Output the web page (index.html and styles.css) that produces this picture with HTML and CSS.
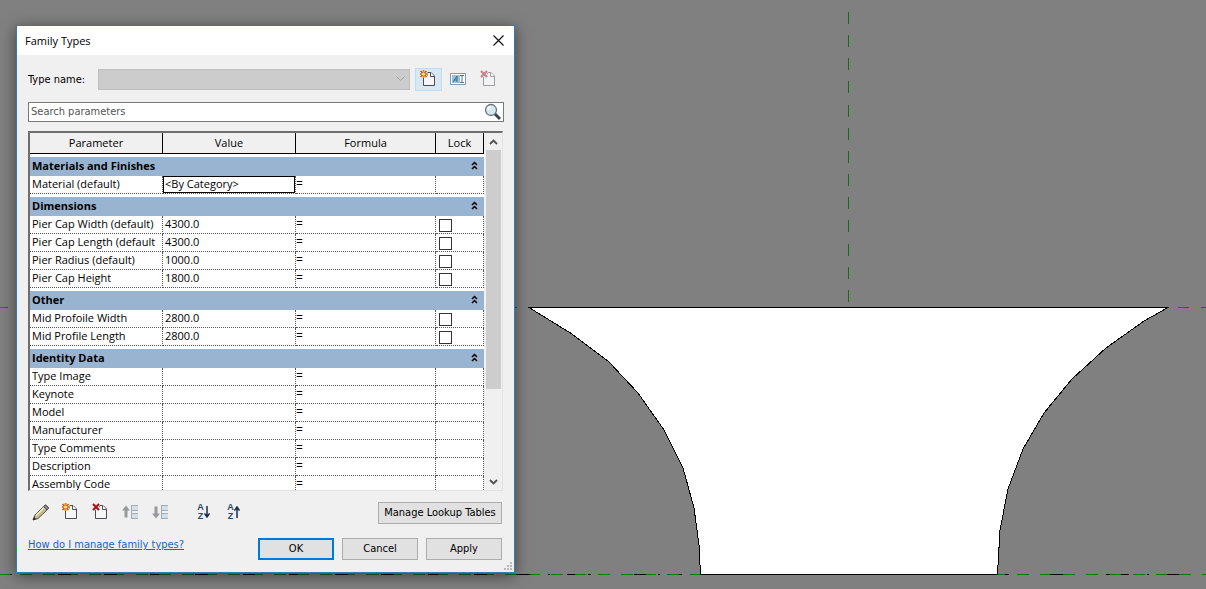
FILE: index.html
```html
<!doctype html>
<html lang="en">
    <head>
        <meta charset="UTF-8" />
        <meta name="viewport" content="width=device-width, initial-scale=1.0" />
        <title>Family Types</title>
        <link rel="stylesheet" href="styles.css">
    </head>
    <body>
        <!-- Shared icon shapes -->
        <svg class="defs" width="0" height="0" aria-hidden="true">
            <symbol id="page" viewBox="0 0 18 18">
                <path d="M4.5 6.500h4v-3h3.500l3.500 3.500v9.500h-11z" fill="#f6f6f6" stroke="#4c4c54" />
                <path d="M11.500 3.500v4h4" fill="#fff" stroke="#4c4c54" />
            </symbol>
            <symbol id="new" viewBox="1 1 18 18">
                <use href="#page" width="18" height="18" />
                <path d="M4.500 1v8M.5 5h8" stroke="#f0f0f0" stroke-width="4" />
                <path d="M4.500 1v8M.5 5h8" stroke="#e88a20" stroke-width="2" />
                <path d="M1.500 2l6 6M7.500 2l-6 6" stroke="#c8501c" stroke-width="1.500" />
                <circle cx="4.500" cy="5" r="1.600" fill="#ffec70" />
            </symbol>
            <symbol id="delete" viewBox="1 1 18 18">
                <use href="#page" width="18" height="18" />
                <path d="M1.500 1l7 7M8.500 1l-7 7" stroke="#f0f0f0" stroke-width="4" />
                <path d="M2 2l6 6M8 2l-6 6" stroke="#a81420" stroke-width="2.200" />
            </symbol>
            <symbol id="chevrons" viewBox="0 0 7 9">
                <path d="M1 4l2.500-2.500L6 4M1 8l2.500-2.500L6 8" fill="none" stroke="#000" stroke-width="1.500" />
            </symbol>
            <symbol id="list" viewBox="0 0 18 18">
                <path d="M10.500 2v14M10 2.500h7M10 7.500h7M10 10.500h7M10 15.500h7" stroke="#a0acb8" />
                <path d="M11 3h6v4h-6zM11 11h6v4h-6z" fill="#d3dee8" />
            </symbol>
        </svg>

        <!-- Pier cap elevation with its reference planes -->
        <svg class="drawing" viewBox="0 0 1206 589" preserveAspectRatio="xMinYMin" role="img" aria-label="Pier cap elevation">
            <g class="plane">
                <path d="M848.500 12V302" stroke-dasharray="12 11.160" />
                <path d="M0 307.500H8M514 307.500H517M1178 307.500H1189M1201 307.500H1206" />
                <path d="M0 574.500H10M20 574.500H700" stroke-dasharray="12 11.100" />
                <path d="M998 574.500H1206" stroke-dasharray="12 11.100" stroke-dashoffset="4" />
            </g>
            <path class="edge" d="M10 574.500h2M58 574.500h13M104 574.500h13M150 574.500h9M195 574.500h13M243 574.500h12M289 574.500h9M335 574.500h13M381 574.500h13M428 574.500h10M474 574.500h13M516 574.500h14M548 574.500h2M567 574.500h8M588 574.500h3M634 574.500h12M658 574.500h2M679 574.500h3M1005 574.500h4M1050 574.500h13M1106 574.500h4M1121 574.500h8M1147 574.500h2M1167 574.500h12" />
            <path class="pier" d="M529 307.500H1168L1144 321 1106 348 1072 379 1044 413 1023 449 1008 489 1000 530 997.500 574.500H700.500L699 545 694 508 683 468 664 430 638 393 609 362 572 334z" />
        </svg>

        <div class="dialog" role="dialog" aria-labelledby="dialog-title">
            <div class="titlebar">
                <h1 id="dialog-title">Family Types</h1>
                <button class="close" aria-label="Close">
                    <svg width="11" height="11" viewBox="0 0 11 11">
                        <path d="M.5.500l10 10M10.500.500l-10 10" stroke="#111" stroke-width="1.200" />
                    </svg>
                </button>
            </div>

            <div class="content">
                <div class="type-row">
                    <label for="type-name">Type name:</label>
                    <div class="type-select">
                        <select id="type-name" disabled><option></option></select>
                        <svg width="9" height="6" viewBox="0 0 9 6"><path d="M.5.500l4 4 4-4" fill="none" stroke="#a4a4a4" /></svg>
                    </div>
                    <div class="type-tools">
                        <button class="tool active" aria-label="New type">
                            <svg width="18" height="18"><use href="#new" /></svg>
                        </button>
                        <button class="tool" aria-label="Rename type" disabled>
                            <svg width="18" height="18" viewBox="1 0 18 18">
                                <path d="M1.500 3.500h15v11h-15z" fill="#fff" stroke="#8698a6" />
                                <path d="M3 5h8v8H3z" fill="#9dc0d4" />
                                <path d="M4 12l4-6v6M5 10h3" fill="none" stroke="#4a6880" />
                                <path d="M11 5.500h4M13 5.500v7M11 12.500h4" stroke="#66727c" />
                            </svg>
                        </button>
                        <button class="tool faded" aria-label="Delete type" disabled>
                            <svg width="18" height="18"><use href="#delete" /></svg>
                        </button>
                    </div>
                </div>

                <div class="search">
                    <input type="text" placeholder="Search parameters" aria-label="Search parameters" />
                    <svg width="18" height="18" viewBox="0 0 18 18">
                        <path d="M10 10l6 6" stroke="#3f444a" stroke-width="3" />
                        <circle cx="7" cy="7" r="5.500" fill="#d5e8f2" stroke="#66747e" stroke-width="1.300" />
                        <path d="M4 7a3 3 0 0 1 3-3" fill="none" stroke="#fff" stroke-width="1.500" />
                    </svg>
                </div>

                <div class="grid">
                    <div class="rows">
                        <table>
                            <thead>
                                <tr>
                                    <th class="col-name">Parameter</th>
                                    <th class="col-value">Value</th>
                                    <th>Formula</th>
                                    <th class="col-lock">Lock</th>
                                </tr>
                            </thead>
                            <tbody>
                                <tr class="group">
                                    <th colspan="4"><div>Materials and Finishes <svg width="7" height="9"><use href="#chevrons" /></svg></div></th>
                                </tr>
                                <tr><td>Material (default)</td><td class="selected"><div>&lt;By Category&gt;</div></td><td>=</td><td></td></tr>
                            </tbody>
                            <tbody>
                                <tr class="group">
                                    <th colspan="4"><div>Dimensions <svg width="7" height="9"><use href="#chevrons" /></svg></div></th>
                                </tr>
                                <tr><td>Pier Cap Width (default)</td><td>4300.0</td><td>=</td><td><input type="checkbox" aria-label="Lock Pier Cap Width" /></td></tr>
                                <tr><td>Pier Cap Length (default</td><td>4300.0</td><td>=</td><td><input type="checkbox" aria-label="Lock Pier Cap Length" /></td></tr>
                                <tr><td>Pier Radius (default)</td><td>1000.0</td><td>=</td><td><input type="checkbox" aria-label="Lock Pier Radius" /></td></tr>
                                <tr><td>Pier Cap Height</td><td>1800.0</td><td>=</td><td><input type="checkbox" aria-label="Lock Pier Cap Height" /></td></tr>
                            </tbody>
                            <tbody>
                                <tr class="group">
                                    <th colspan="4"><div>Other <svg width="7" height="9"><use href="#chevrons" /></svg></div></th>
                                </tr>
                                <tr><td>Mid Profoile Width</td><td>2800.0</td><td>=</td><td><input type="checkbox" aria-label="Lock Mid Profoile Width" /></td></tr>
                                <tr><td>Mid Profile Length</td><td>2800.0</td><td>=</td><td><input type="checkbox" aria-label="Lock Mid Profile Length" /></td></tr>
                            </tbody>
                            <tbody>
                                <tr class="group">
                                    <th colspan="4"><div>Identity Data <svg width="7" height="9"><use href="#chevrons" /></svg></div></th>
                                </tr>
                                <tr><td>Type Image</td><td></td><td>=</td><td></td></tr>
                                <tr><td>Keynote</td><td></td><td>=</td><td></td></tr>
                                <tr><td>Model</td><td></td><td>=</td><td></td></tr>
                                <tr><td>Manufacturer</td><td></td><td>=</td><td></td></tr>
                                <tr><td>Type Comments</td><td></td><td>=</td><td></td></tr>
                                <tr><td>Description</td><td></td><td>=</td><td></td></tr>
                                <tr><td>Assembly Code</td><td></td><td>=</td><td></td></tr>
                            </tbody>
                        </table>
                    </div>
                    <div class="scrollbar">
                        <button aria-label="Scroll up">
                            <svg width="9" height="6" viewBox="0 0 9 6"><path d="M1 5l3.500-3.500L8 5" fill="none" stroke="#505050" stroke-width="1.800" /></svg>
                        </button>
                        <div class="track"><div class="thumb"></div></div>
                        <button aria-label="Scroll down">
                            <svg width="9" height="6" viewBox="0 0 9 6"><path d="M1 1l3.500 3.500L8 1" fill="none" stroke="#505050" stroke-width="1.800" /></svg>
                        </button>
                    </div>
                </div>

                <div class="param-row">
                    <div class="param-tools">
                        <button class="tool" aria-label="Edit parameter">
                            <svg width="18" height="18" viewBox="0 0 18 18">
                                <path d="M1 17l2-5L12.500 2.500q1-1 2 0l1.500 1.500q1 1 0 2L6 15.500z" fill="#c9bd8c" stroke="#484848" />
                                <path d="M4 12.500l8-8" stroke="#f6edc8" stroke-width="1.500" />
                                <path d="M11.500 3.500l3.500 3.500 1.500-2-3-3z" fill="#8d8d95" stroke="#555" />
                                <path d="M1 17l1-3 2 2z" fill="#222" />
                            </svg>
                        </button>
                        <button class="tool" aria-label="New parameter">
                            <svg width="18" height="18"><use href="#new" /></svg>
                        </button>
                        <button class="tool" aria-label="Delete parameter">
                            <svg width="18" height="18"><use href="#delete" /></svg>
                        </button>
                        <button class="tool" aria-label="Move up" disabled>
                            <svg width="18" height="18" viewBox="1 0 18 18">
                                <use href="#list" width="18" height="18" />
                                <path d="M5 2.500l4 5H6.500v7h-3v-7H1z" fill="#969a9e" />
                            </svg>
                        </button>
                        <button class="tool" aria-label="Move down" disabled>
                            <svg width="18" height="18" viewBox="1 0 18 18">
                                <use href="#list" width="18" height="18" />
                                <path d="M5 15.500l4-5H6.500v-7h-3v7H1z" fill="#969a9e" />
                            </svg>
                        </button>
                        <button class="tool sort" aria-label="Sort ascending">
                            <span>A<br />Z</span>
                            <svg width="6" height="12" viewBox="0 0 6 12"><path d="M3 0v10M.5 7.500L3 11l2.500-3.500" fill="none" stroke="#1e2c44" stroke-width="1.500" /></svg>
                        </button>
                        <button class="tool" aria-label="Sort descending">
                            <span>A<br />Z</span>
                            <svg width="6" height="12" viewBox="0 0 6 12"><path d="M3 12V2M.5 4.500L3 1l2.500 3.500" fill="none" stroke="#1e2c44" stroke-width="1.500" /></svg>
                        </button>
                    </div>
                    <button class="btn btn-wide">Manage Lookup Tables</button>
                </div>

                <div class="footer">
                    <a href="#help">How do I manage family types?</a>
                    <div class="actions">
                        <button class="btn btn-default">OK</button>
                        <button class="btn">Cancel</button>
                        <button class="btn">Apply</button>
                    </div>
                </div>
            </div>

            <svg class="grip" width="8" height="8" viewBox="0 0 8 8" aria-hidden="true">
                <path d="M6 0h2v2H6zM3 3h2v2H3zM6 3h2v2H6zM0 6h2v2H0zM3 6h2v2H3zM6 6h2v2H6z" fill="#b8b8b8" />
            </svg>
        </div>
    </body>
</html>
```
FILE: styles.css
```css
* {
    box-sizing: border-box;
}

body {
    margin: 0;
    min-height: 100vh;
    background: #808080;
    color: #000;
    font-family: "Open Sans", "Noto Sans", sans-serif;
    font-size: 11px;
    line-height: 15px;
    overflow: hidden;
}

button,
input,
select {
    font: inherit;
    color: inherit;
}

.defs {
    position: absolute;
}

.drawing {
    display: block;
    width: 100%;
    shape-rendering: crispEdges;
}

.plane path {
    fill: none;
    stroke: #127012;
}

.edge {
    stroke: #000;
}

.pier {
    fill: #fff;
    stroke: #000;
}

/* Dialog window */
.dialog {
    position: absolute;
    left: 16px;
    top: 25px;
    width: 499px;
    background: #f0f0f0;
    border: 1px solid #2f7ab8;
    box-shadow: 0 3px 14px rgba(0, 0, 0, 0.5);
}

.titlebar {
    display: flex;
    align-items: center;
    justify-content: space-between;
    height: 29px;
    padding: 0 10px 0 8px;
    background: #fff;
}

.titlebar h1 {
    margin: 0;
    font-size: 11px;
    font-weight: normal;
}

.close {
    display: flex;
    padding: 0;
    border: 0;
    background: none;
}

.content {
    padding: 13px 10px 12px 11px;
}

.type-row,
.search,
.param-row,
.footer {
    font-family: "DejaVu Sans Condensed", "Open Sans", sans-serif;
    font-size: 11px;
}

.type-row {
    display: flex;
    align-items: center;
    height: 22px;
}

.type-row label {
    width: 70px;
}

.type-select {
    display: flex;
    align-items: center;
    flex: 1;
    height: 21px;
    padding-right: 4px;
    background: #ccc;
    border: 1px solid #bfbfbf;
}

.type-select select {
    flex: 1;
    height: 19px;
    appearance: none;
    border: 0;
    background: none;
}

.type-tools {
    display: flex;
    gap: 3px;
    margin: 0 2px 0 5px;
}

.tool {
    display: flex;
    align-items: center;
    justify-content: center;
    width: 27px;
    height: 23px;
    padding: 0;
    border: 1px solid transparent;
    background: none;
}

.tool.active {
    background: #d8e8f5;
    border-color: #c0dcf3;
}

.tool.faded svg {
    opacity: 0.5;
}

.search {
    display: flex;
    align-items: center;
    height: 20px;
    margin-top: 12px;
    padding: 0 1px 0 2px;
    background: #fff;
    border: 1px solid #7a7a7a;
}

.search input {
    flex: 1;
    min-width: 0;
    padding: 0 0 2px;
    border: 0;
    outline: 0;
    background: none;
}

.search input::placeholder {
    color: #555;
}

/* Parameter grid */
.grid {
    display: flex;
    height: 360px;
    margin: 9px 1px 0 0;
    border: 1px solid #e3e3e3;
    border-top: 2px solid #6e6e6e;
    border-left: 2px solid #6e6e6e;
    background: #fff;
}

.rows {
    flex: 1;
    overflow: hidden;
}

table {
    width: 100%;
    table-layout: fixed;
    border-collapse: separate;
    border-spacing: 0;
}

.col-name,
.col-value {
    width: 133px;
}

.col-lock {
    width: 48px;
}

thead th {
    height: 21px;
    padding: 0 0 2px;
    background: #f0f0f0;
    border-right: 1px solid #000;
    border-bottom: 1px solid #000;
    font-weight: normal;
}

td {
    height: 18px;
    padding: 0 0 0 2px;
    border-right: 1px dotted #555;
    border-bottom: 1px dotted #555;
    vertical-align: top;
    white-space: nowrap;
    overflow: hidden;
}

td:nth-child(3) {
    padding-left: 0;
    font-size: 12px;
}

td input {
    display: block;
    appearance: none;
    width: 13px;
    height: 13px;
    margin: 3px 0 0 1px;
    border: 1px solid #333;
    background: #fff;
}

td.selected {
    padding: 0;
}

.selected div {
    height: 17px;
    padding-left: 1px;
    border: 1px solid #000;
    line-height: 13px;
}

.group th {
    padding: 3px 0 0;
    text-align: left;
}

.group div {
    display: flex;
    align-items: center;
    justify-content: space-between;
    height: 19px;
    padding: 0 6px 2px 2px;
    background: #99b4d1;
}

.scrollbar {
    display: flex;
    flex-direction: column;
    width: 18px;
    padding: 0 1px 0 2px;
    background: #f0f0f0;
}

.scrollbar button {
    display: flex;
    align-items: center;
    justify-content: center;
    height: 17px;
    padding: 0;
    border: 0;
    background: none;
}

.track {
    flex: 1;
}

.thumb {
    height: 74%;
    background: #cdcdcd;
}

/* Bottom area */
.param-row {
    display: flex;
    align-items: flex-start;
    justify-content: space-between;
    margin-top: 11px;
    padding-right: 2px;
}

.param-tools {
    display: flex;
    gap: 5px;
}

.param-tools .tool {
    width: 25px;
    height: 20px;
}

.param-tools .sort {
    margin-left: 13px;
}

.tool span {
    color: #2c4868;
    font-family: "Liberation Sans", sans-serif;
    font-size: 9px;
    font-weight: bold;
    line-height: 9px;
}

.btn {
    width: 76px;
    height: 22px;
    padding: 0;
    border: 1px solid #adadad;
    background: #e1e1e1;
    line-height: 20px;
    white-space: nowrap;
}

.btn-wide {
    width: 124px;
}

.btn-default {
    border: 2px solid #0078d7;
    line-height: 18px;
}

.footer {
    display: flex;
    align-items: flex-start;
    justify-content: space-between;
    margin-top: 14px;
    padding-right: 2px;
    line-height: 13px;
}

.footer a {
    color: #1a62c4;
}

.actions {
    display: flex;
    gap: 8px;
}

.grip {
    position: absolute;
    right: 2px;
    bottom: 2px;
}
```
